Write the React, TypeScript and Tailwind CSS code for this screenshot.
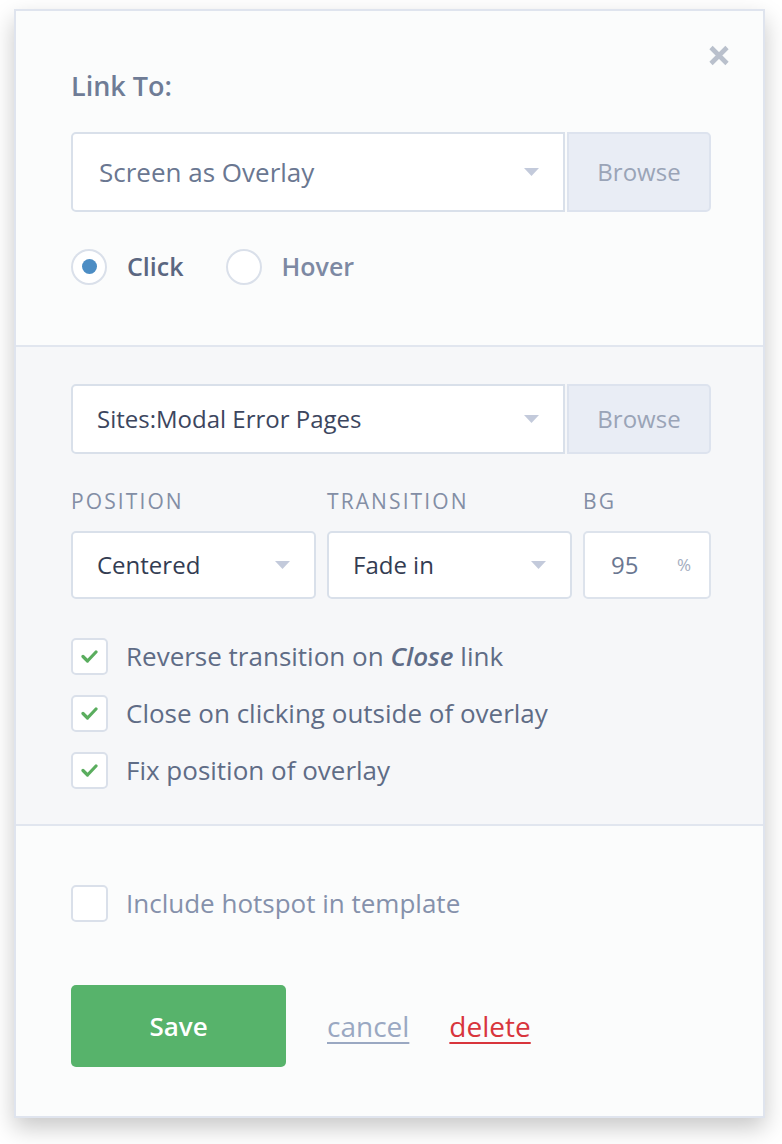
import { useState } from 'react';

const FONT = "font-['Open_Sans',sans-serif]";

function Caret() {
  return (
    <svg width="15" height="8" viewBox="0 0 15 8" aria-hidden="true">
      <path d="M0 0h15L7.5 8z" fill="#c3cadb" />
    </svg>
  );
}

function Check() {
  return (
    <svg width="17" height="13" viewBox="0 0 17 13" aria-hidden="true">
      <path d="M2 6.5l4.5 4.5L15 2" fill="none" stroke="#5aad5e" strokeWidth="3.2" strokeLinecap="round" strokeLinejoin="round" />
    </svg>
  );
}

function CloseIcon() {
  return (
    <svg width="22" height="21" viewBox="0 0 22 21" aria-hidden="true">
      <path d="M3 2.5l16 16M19 2.5l-16 16" stroke="#b9c0cc" strokeWidth="4.6" strokeLinecap="butt" />
    </svg>
  );
}

function Box({ checked }: { checked: boolean }) {
  return (
    <span className="flex h-[37px] w-[37px] shrink-0 items-center justify-center rounded-[5px] border-2 border-[#dae0ea] bg-white">
      {checked && <Check />}
    </span>
  );
}

function SelectRow({ value, dark, tall }: { value: string; dark?: boolean; tall?: boolean }) {
  return (
    <div className={`flex ${tall ? 'h-[80px]' : 'h-[70px]'}`}>
      <div className={`flex flex-1 items-center justify-between rounded-l-[5px] border-2 border-[#d9e0ea] bg-white pr-[24px] ${dark ? 'pl-[24px]' : 'pl-[26px]'}`}>
        <span className={dark ? 'text-[24px] text-[#3c465e]' : 'text-[26px] text-[#6a7791]'}>{value}</span>
        <Caret />
      </div>
      <div className="ml-[2px] flex w-[144px] items-center justify-center rounded-r-[5px] border-2 border-[#dde3ee] bg-[#e9edf5] text-[24px] text-[#9aa4b7]">
        Browse
      </div>
    </div>
  );
}

function Dropdown({ value }: { value: string }) {
  return (
    <div className="flex h-[68px] items-center justify-between rounded-[5px] border-2 border-[#d9e0ea] bg-white pr-[24px] pl-[24px]">
      <span className="text-[24px] text-[#333c52]">{value}</span>
      <Caret />
    </div>
  );
}

const OPTIONS = [
  { id: 'reverse', label: 'Reverse transition on', em: 'Close', tail: 'link' },
  { id: 'outside', label: 'Close on clicking outside of overlay' },
  { id: 'fix', label: 'Fix position of overlay' },
];

export default function App() {
  const [trigger, setTrigger] = useState<'click' | 'hover'>('click');

  return (
    <div className={`${FONT} min-h-[1144px] bg-white pt-[9px] pl-[14px]`}>
      <div className="w-[751px] border-2 border-[#dfe4ee] shadow-[0_10px_22px_rgba(0,0,0,0.22)]">
        {/* link target */}
        <section className="relative h-[334px] bg-[#fbfcfc] pt-[57px] pr-[52px] pl-[55px]">
          <button className="absolute top-[34px] right-[33px]" aria-label="Close">
            <CloseIcon />
          </button>
          <h2 className="text-[27px] leading-[36px] font-semibold text-[#6f7c96]">Link To:</h2>
          <div className="mt-[28px]">
            <SelectRow value="Screen as Overlay" tall />
          </div>
          <div className="mt-[36px] flex items-center">
            {(['click', 'hover'] as const).map((k) => (
              <label key={k} className="mr-[42px] flex cursor-pointer items-center" onClick={() => setTrigger(k)}>
                <span className="flex h-[36px] w-[36px] items-center justify-center rounded-full border-2 border-[#dae0ea] bg-white">
                  {trigger === k && <span className="h-[15px] w-[15px] rounded-full bg-[#4c8dc4]" />}
                </span>
                <span className={`ml-[20px] text-[25px] font-semibold ${trigger === k ? 'text-[#5b6781]' : 'text-[#7d89a3]'}`}>
                  {k === 'click' ? 'Click' : 'Hover'}
                </span>
              </label>
            ))}
          </div>
        </section>

        {/* overlay options */}
        <section className="h-[481px] border-y-2 border-[#e1e6ef] bg-[#f6f7f9] pt-[37px] pr-[52px] pl-[55px]">
          <SelectRow value="Sites:Modal Error Pages" dark />
          <div className="mt-[32px] grid grid-cols-[245px_245px_1fr] gap-x-[11px]">
            <div className="text-[21px] tracking-[0.1em] text-[#838ea5]">POSITION</div>
            <div className="text-[21px] tracking-[0.1em] text-[#838ea5]">TRANSITION</div>
            <div className="text-[21px] tracking-[0.1em] text-[#838ea5]">BG</div>
            <div className="mt-[13px]">
              <Dropdown value="Centered" />
            </div>
            <div className="mt-[13px]">
              <Dropdown value="Fade in" />
            </div>
            <div className="mt-[13px] flex h-[68px] items-center justify-between rounded-[5px] border-2 border-[#dde3ec] bg-white pr-[18px] pl-[26px]">
              <span className="text-[24px] text-[#6a7791]">95</span>
              <span className="text-[17px] text-[#a3acbe]">%</span>
            </div>
          </div>
          <ul className="mt-[38px] flex flex-col gap-[18px]">
            {OPTIONS.map((o) => (
              <li key={o.id} className="flex items-center">
                <Box checked />
                <span className="ml-[18px] text-[26px] text-[#5f6c86]">
                  {o.label}
                  {o.em && (
                    <>
                      {' '}
                      <em className="font-semibold">{o.em}</em> {o.tail}
                    </>
                  )}
                </span>
              </li>
            ))}
          </ul>
        </section>

        {/* footer */}
        <section className="h-[290px] bg-[#fbfcfc] pt-[58px] pr-[52px] pl-[55px]">
          <label className="flex items-center">
            <Box checked={false} />
            <span className="ml-[18px] text-[26px] text-[#8591ab]">Include hotspot in template</span>
          </label>
          <div className="mt-[62px] flex items-center">
            <button className="h-[82px] w-[215px] rounded-[5px] bg-[#57b36b] text-[26px] font-semibold text-white">Save</button>
            <a href="#" className="ml-[41px] text-[28px] text-[#9aa8c2] underline decoration-2 underline-offset-[5px]">
              cancel
            </a>
            <a href="#" className="ml-[40px] text-[28px] text-[#d8353c] underline decoration-2 underline-offset-[5px]">
              delete
            </a>
          </div>
        </section>
      </div>
    </div>
  );
}
